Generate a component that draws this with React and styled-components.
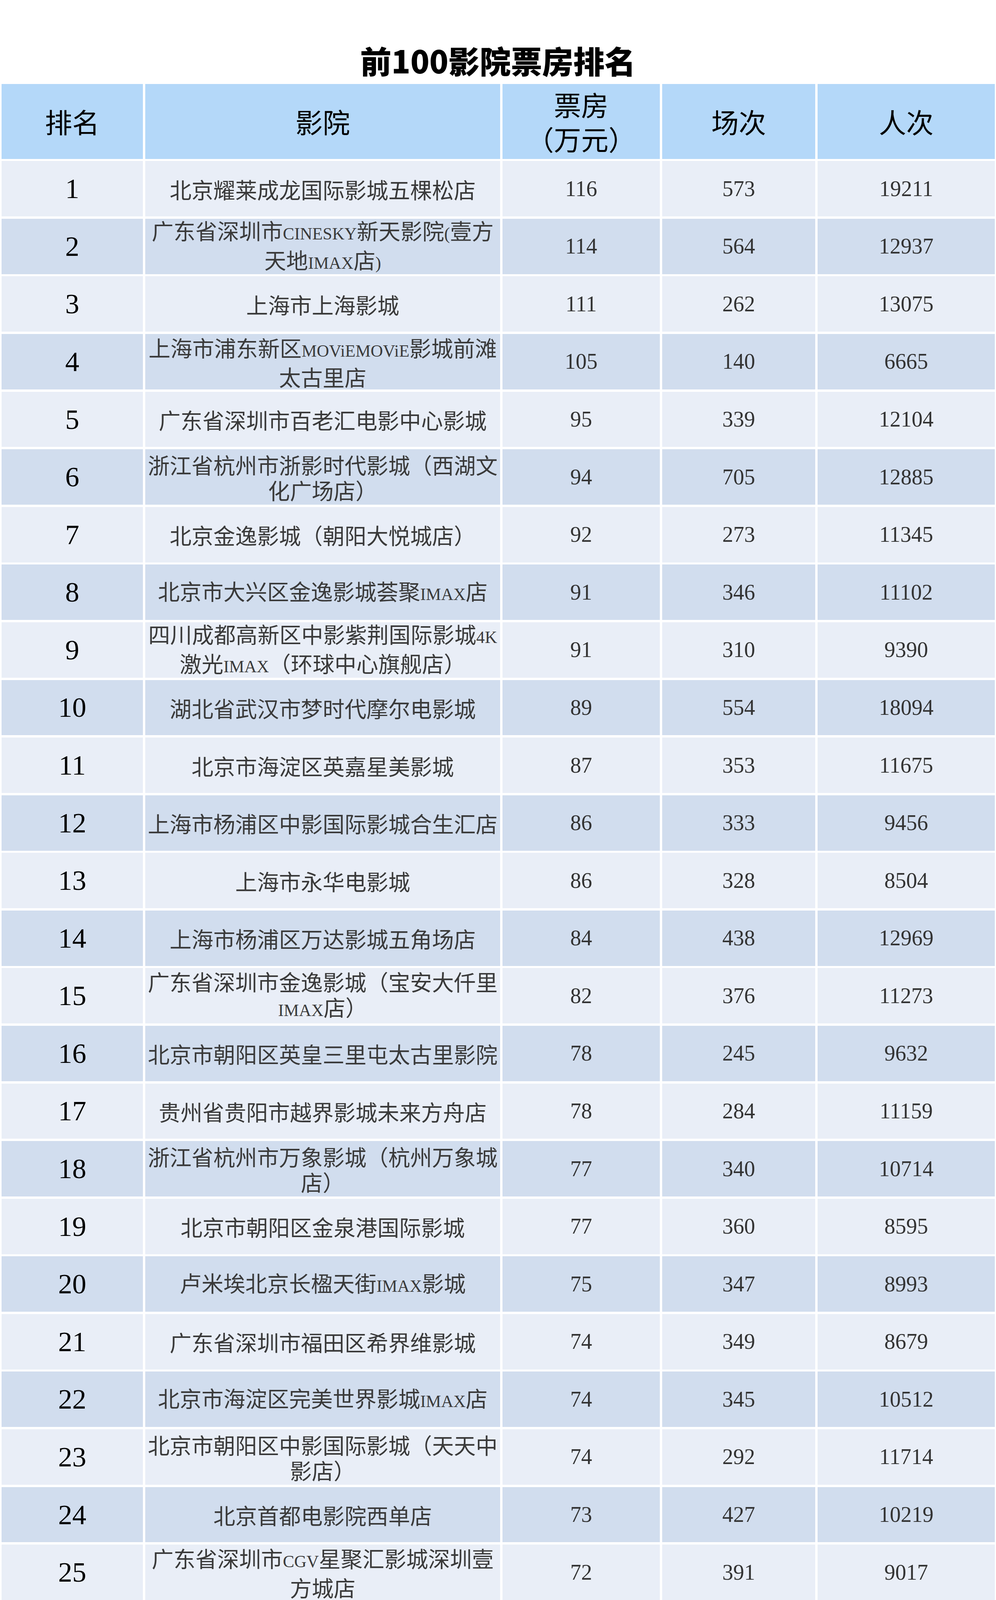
import React from "react";
import styled, { createGlobalStyle } from "styled-components";

/* vertical sizes follow the viewport: 4252 design px = 100vh */
const v = (px) => `calc(${px} * 100vh / 4252)`;

const GlobalStyle = createGlobalStyle`
  html, body {
    margin: 0;
    padding: 0;
    background: #ffffff;
    overflow: hidden;
  }
  body {
    font-family: "Noto Sans CJK SC", "Noto Sans", sans-serif;
  }
`;

const Page = styled.div`
  width: 2551px;
  height: 100vh;
  display: flex;
  flex-direction: column;
  background: #ffffff;
`;

const TitleBar = styled.div`
  height: ${v(223)};
  flex: none;
  box-sizing: border-box;
  display: flex;
  align-items: flex-end;
  justify-content: center;
  padding-bottom: ${v(23)};
`;

const Title = styled.h1`
  margin: 0;
  font-family: "Noto Sans CJK SC", "Noto Sans", sans-serif;
  font-weight: 900;
  font-size: 80px;
  line-height: 80px;
  color: #000000;
`;

const Table = styled.div`
  flex: 1;
  min-height: 0;
  display: grid;
  grid-template-rows: 199fr repeat(25, 147.16fr);
  row-gap: ${v(6)};
  padding: 0 3px 0 4px;
`;

const Row = styled.div`
  display: grid;
  grid-template-columns: 362px 909px 403px 392px 454px;
  column-gap: 6px;
  min-height: 0;
`;

const Cell = styled.div`
  display: flex;
  flex-direction: column;
  align-items: center;
  justify-content: center;
  text-align: center;
  min-height: 0;
  background: ${(p) =>
    p.$tone === "head" ? "#b4d8f9" : p.$tone === "even" ? "#d1ddee" : "#e9eef7"};
`;

const HeadText = styled.div`
  font-family: "Noto Sans CJK SC", sans-serif;
  font-weight: 400;
  font-size: 70px;
  line-height: 88px;
  color: #000000;
  white-space: nowrap;
`;

const RankText = styled.div`
  font-family: "Liberation Serif", "DejaVu Serif", serif;
  font-size: 72px;
  line-height: 80px;
  color: #000000;
`;

const NameLine = styled.div`
  font-family: "Noto Sans CJK SC", sans-serif;
  font-weight: 400;
  font-size: 56px;
  line-height: 65px;
  color: #3a3a3a;
  white-space: nowrap;
`;

const Latin = styled.span`
  font-family: "Liberation Serif", "DejaVu Serif", serif;
  font-size: 0.78em;
`;

const NumText = styled.div`
  font-family: "Liberation Serif", "DejaVu Serif", serif;
  font-size: 56px;
  line-height: 65px;
  color: #333333;
`;

const rows = [
  [["北京耀莱成龙国际影城五棵松店"], 116, 573, 19211],
  [["广东省深圳市CINESKY新天影院(壹方", "天地IMAX店)"], 114, 564, 12937],
  [["上海市上海影城"], 111, 262, 13075],
  [["上海市浦东新区MOViEMOViE影城前滩", "太古里店"], 105, 140, 6665],
  [["广东省深圳市百老汇电影中心影城"], 95, 339, 12104],
  [["浙江省杭州市浙影时代影城（西湖文", "化广场店）"], 94, 705, 12885],
  [["北京金逸影城（朝阳大悦城店）"], 92, 273, 11345],
  [["北京市大兴区金逸影城荟聚IMAX店"], 91, 346, 11102],
  [["四川成都高新区中影紫荆国际影城4K", "激光IMAX（环球中心旗舰店）"], 91, 310, 9390],
  [["湖北省武汉市梦时代摩尔电影城"], 89, 554, 18094],
  [["北京市海淀区英嘉星美影城"], 87, 353, 11675],
  [["上海市杨浦区中影国际影城合生汇店"], 86, 333, 9456],
  [["上海市永华电影城"], 86, 328, 8504],
  [["上海市杨浦区万达影城五角场店"], 84, 438, 12969],
  [["广东省深圳市金逸影城（宝安大仟里", "IMAX店）"], 82, 376, 11273],
  [["北京市朝阳区英皇三里屯太古里影院"], 78, 245, 9632],
  [["贵州省贵阳市越界影城未来方舟店"], 78, 284, 11159],
  [["浙江省杭州市万象影城（杭州万象城", "店）"], 77, 340, 10714],
  [["北京市朝阳区金泉港国际影城"], 77, 360, 8595],
  [["卢米埃北京长楹天街IMAX影城"], 75, 347, 8993],
  [["广东省深圳市福田区希界维影城"], 74, 349, 8679],
  [["北京市海淀区完美世界影城IMAX店"], 74, 345, 10512],
  [["北京市朝阳区中影国际影城（天天中", "影店）"], 74, 292, 11714],
  [["北京首都电影院西单店"], 73, 427, 10219],
  [["广东省深圳市CGV星聚汇影城深圳壹", "方城店"], 72, 391, 9017],
];

function renderLine(text) {
  const parts = text.split(/([A-Za-z0-9()]+)/).filter((s) => s.length > 0);
  return parts.map((p, i) =>
    /^[A-Za-z0-9()]+$/.test(p) ? (
      <Latin key={i}>{p}</Latin>
    ) : (
      <React.Fragment key={i}>{p}</React.Fragment>
    )
  );
}

export default function App() {
  return (
    <Page>
      <GlobalStyle />
      <TitleBar>
        <Title>前100影院票房排名</Title>
      </TitleBar>
      <Table>
        <Row>
          <Cell $tone="head"><HeadText>排名</HeadText></Cell>
          <Cell $tone="head"><HeadText>影院</HeadText></Cell>
          <Cell $tone="head">
            <HeadText>票房</HeadText>
            <HeadText>（万元）</HeadText>
          </Cell>
          <Cell $tone="head"><HeadText>场次</HeadText></Cell>
          <Cell $tone="head"><HeadText>人次</HeadText></Cell>
        </Row>
        {rows.map(([name, box, shows, people], i) => {
          const tone = i % 2 === 0 ? "odd" : "even";
          return (
            <Row key={i}>
              <Cell $tone={tone}><RankText>{i + 1}</RankText></Cell>
              <Cell $tone={tone}>
                {name.map((line, j) => (
                  <NameLine key={j}>{renderLine(line)}</NameLine>
                ))}
              </Cell>
              <Cell $tone={tone}><NumText>{box}</NumText></Cell>
              <Cell $tone={tone}><NumText>{shows}</NumText></Cell>
              <Cell $tone={tone}><NumText>{people}</NumText></Cell>
            </Row>
          );
        })}
      </Table>
    </Page>
  );
}
